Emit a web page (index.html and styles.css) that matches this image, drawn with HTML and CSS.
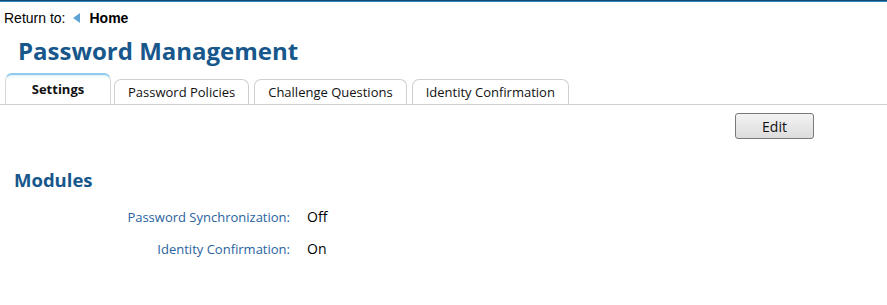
FILE: index.html
```html
<!DOCTYPE html>
<html>
<head>
<meta charset="utf-8">
<link rel="stylesheet" href="styles.css">
</head>
<body>
<div class="topbar"></div>
<div class="return">
  <span class="return-label">Return to:</span>
  <span class="tri"></span>
  <a class="home">Home</a>
</div>
<h1 class="title">Password Management</h1>
<div class="tabs">
  <div class="tab active">Settings</div>
  <div class="tab">Password Policies</div>
  <div class="tab">Challenge Questions</div>
  <div class="tab">Identity Confirmation</div>
</div>
<div class="toolbar">
  <button class="btn">Edit</button>
</div>
<h2 class="section">Modules</h2>
<div class="rows">
  <div class="row"><div class="label">Password Synchronization:</div><div class="value">Off</div></div>
  <div class="row"><div class="label">Identity Confirmation:</div><div class="value">On</div></div>
</div>
</body>
</html>
```
FILE: styles.css
```css
html, body {
  margin: 0;
  padding: 0;
  background: #fff;
}
body {
  font-family: "Open Sans", sans-serif;
  color: #000;
}
.topbar {
  height: 1px;
  background: #154a78;
  border-bottom: 1px solid #2f86b6;
}
.return {
  display: flex;
  align-items: center;
  padding: 7px 0 0 4px;
  height: 18px;
  font-family: "Liberation Sans", Arial, sans-serif;
  font-size: 14px;
  color: #000;
}
.return-label {
  margin-right: 8px;
}
.tri {
  width: 0;
  height: 0;
  border-top: 5px solid transparent;
  border-bottom: 5px solid transparent;
  border-right: 7px solid #5ea3d3;
  margin-right: 9px;
}
.home {
  font-weight: bold;
  color: #000;
}
.title {
  margin: 7px 0 0 18px;
  font-size: 24px;
  line-height: 33px;
  font-weight: 700;
  color: #17578c;
}
.tabs {
  display: flex;
  align-items: flex-end;
  margin-top: 6px;
  padding-left: 5px;
  border-bottom: 1px solid #d0d0d0;
  height: 31px;
}
.tab {
  box-sizing: border-box;
  height: 25px;
  margin-right: 5px;
  padding: 0 13px;
  border: 1px solid #cfcfcf;
  border-bottom: none;
  border-radius: 7px 7px 0 0;
  font-size: 13px;
  line-height: 25px;
  color: #111;
  background: #fff;
}
.tab.active {
  height: 31px;
  width: 106px;
  margin-right: 3px;
  text-align: center;
  font-weight: 700;
  line-height: 28px;
  border-color: #d6d6d6;
  border-top: 2px solid #8fcbea;
  box-shadow: inset 0 3px 3px -2px #d4ecf8;
}
.toolbar {
  display: flex;
  justify-content: flex-end;
  padding: 8px 73px 0 0;
}
.btn {
  width: 79px;
  height: 26px;
  border: 1px solid #7a7a7a;
  border-radius: 3px;
  background: linear-gradient(#f3f3f3, #dcdcdc);
  font-family: "Open Sans", sans-serif;
  font-size: 14px;
  color: #111;
  padding: 0;
}
.section {
  margin: 29px 0 0 14px;
  font-size: 18.5px;
  line-height: 24px;
  font-weight: 700;
  color: #17578c;
}
.rows {
  margin-top: 15px;
}
.row {
  display: flex;
  align-items: baseline;
  height: 32px;
}
.label {
  width: 290px;
  text-align: right;
  font-size: 13px;
  color: #2a63a0;
}
.value {
  margin-left: 17px;
  font-size: 14px;
  color: #000;
}
```
